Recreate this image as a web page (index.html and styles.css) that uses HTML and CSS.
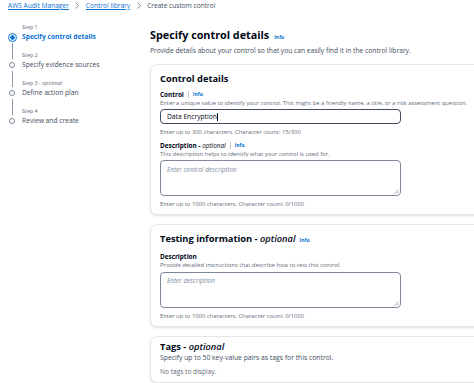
FILE: index.html
```html
<!DOCTYPE html>
<html lang="en">
<head>
    <meta charset="UTF-8">
    <title>Create custom control</title>
    <link rel="stylesheet" href="styles.css">
</head>
<body>
    <div class="crumbs">
        <a href="#">AWS Audit Manager</a>
        <svg class="chev" viewBox="0 0 4 7"><polyline points="0.5,0.5 3.5,3.5 0.5,6.5"/></svg>
        <a href="#">Control library</a>
        <svg class="chev" viewBox="0 0 4 7"><polyline points="0.5,0.5 3.5,3.5 0.5,6.5"/></svg>
        <span class="here">Create custom control</span>
    </div>

    <div class="page">
        <ol class="steps">
            <li class="step active">
                <span class="step-num">Step 1</span>
                <span class="dot"></span>
                <span class="step-title">Specify control details</span>
                <span class="rail rail-down"></span>
            </li>
            <li class="step">
                <span class="rail rail-up"></span>
                <span class="step-num">Step 2</span>
                <span class="dot"></span>
                <span class="step-title">Specify evidence sources</span>
                <span class="rail rail-down"></span>
            </li>
            <li class="step">
                <span class="rail rail-up"></span>
                <span class="step-num">Step 3 - <i>optional</i></span>
                <span class="dot"></span>
                <span class="step-title">Define action plan</span>
                <span class="rail rail-down"></span>
            </li>
            <li class="step">
                <span class="rail rail-up"></span>
                <span class="step-num">Step 4</span>
                <span class="dot"></span>
                <span class="step-title">Review and create</span>
            </li>
        </ol>

        <div class="main">
            <h1>Specify control details <a class="info" href="#">Info</a></h1>
            <p class="lead">Provide details about your control so that you can easily find it in the control library.</p>

            <div class="card">
                <h2>Control details</h2>
                <div class="field">
                    <div class="label">Control <span class="sep"></span><a class="info" href="#">Info</a></div>
                    <div class="hint">Enter a unique value to identify your control. This might be a friendly name, a title, or a risk assessment question.</div>
                    <div class="input">Data Encryption<span class="caret"></span></div>
                    <div class="count">Enter up to 300 characters. Character count: 15/300</div>
                </div>
                <div class="field">
                    <div class="label">Description -&nbsp;<i>optional</i> <span class="sep"></span><a class="info" href="#">Info</a></div>
                    <div class="hint">This description helps to identify what your control is used for.</div>
                    <div class="area">Enter control description
                        <svg class="grip" viewBox="0 0 5 5"><line x1="0.5" y1="4.5" x2="4.5" y2="0.5"/><line x1="2.5" y1="4.5" x2="4.5" y2="2.5"/></svg>
                    </div>
                    <div class="count">Enter up to 1000 characters. Character count: 0/1000</div>
                </div>
            </div>

            <div class="card">
                <h2>Testing information -&nbsp;<i>optional</i> <a class="info" href="#">Info</a></h2>
                <div class="field">
                    <div class="label">Description</div>
                    <div class="hint">Provide detailed instructions that describe how to test this control.</div>
                    <div class="area">Enter description
                        <svg class="grip" viewBox="0 0 5 5"><line x1="0.5" y1="4.5" x2="4.5" y2="0.5"/><line x1="2.5" y1="4.5" x2="4.5" y2="2.5"/></svg>
                    </div>
                    <div class="count">Enter up to 1000 characters. Character count: 0/1000</div>
                </div>
            </div>

            <div class="card card-tags">
                <h2>Tags -&nbsp;<i>optional</i></h2>
                <p class="card-desc">Specify up to 50 key-value pairs as tags for this control.</p>
                <p class="empty">No tags to display.</p>
            </div>
        </div>
    </div>
</body>
</html>
```

FILE: styles.css
```css
*{
    margin:0;
    padding:0;
    box-sizing:border-box;
}
body{
    font-family:"Open Sans", "Noto Sans", sans-serif;
    color:#000716;
    background:#fff;
    width:474px;
    height:383px;
    overflow:hidden;
}
a{
    color:#0972d3;
}

/* breadcrumbs */
.crumbs{
    display:flex;
    align-items:center;
    gap:6.5px;
    height:11px;
    padding-left:8px;
    font-size:6.6px;
    line-height:11px;
    white-space:nowrap;
}
.crumbs a{
    text-decoration:underline;
}
.crumbs .here{
    color:#414d5c;
}
.chev{
    width:4px;
    height:7px;
    fill:none;
    stroke:#5f6b7a;
    stroke-width:0.8;
}

.page{
    display:grid;
    grid-template-columns:150px 340px;
    margin-top:11px;
}

/* wizard steps */
.steps{
    list-style:none;
    padding-left:6px;
}
.step{
    display:grid;
    grid-template-columns:12px 1fr;
    grid-template-rows:10px 10px 8px;
    column-gap:4px;
}
.step-num{
    grid-column:2;
    grid-row:1;
    font-size:5.4px;
    line-height:10px;
    color:#5f6b7a;
}
.rail{
    grid-column:1;
    justify-self:center;
    width:1px;
    background:#8d99a8;
}
.rail-up{
    grid-row:1;
    margin-bottom:1px;
}
.rail-down{
    grid-row:3;
    margin-top:1px;
}
.dot{
    grid-column:1;
    grid-row:2;
    align-self:center;
    justify-self:center;
    width:6px;
    height:6px;
    border:1px solid #7d8998;
    border-radius:50%;
    background:#fff;
}
.step.active .dot{
    width:9px;
    height:9px;
    border:1.5px solid #0972d3;
    background:radial-gradient(circle, #0972d3 0 2px, #fff 2.4px);
}
.step-title{
    grid-column:2;
    grid-row:2;
    font-size:6.7px;
    line-height:10px;
    color:#414d5c;
    white-space:nowrap;
}
.step.active .step-title{
    color:#0972d3;
    font-weight:700;
}

/* main column */
.main{
    padding-top:6px;
}
h1{
    display:flex;
    align-items:baseline;
    gap:5px;
    font-size:10.8px;
    line-height:14px;
    font-weight:700;
}
.info{
    font-size:5px;
    font-weight:700;
    text-decoration:none;
}
.lead{
    margin-top:1.5px;
    font-size:6.7px;
    line-height:9px;
    color:#414d5c;
}

.card{
    margin-top:9px;
    padding:7px 9px 6px;
    border:1px solid #e4e6e9;
    border-radius:7px;
    background:#fff;
    box-shadow:0 1px 2px rgba(0,7,22,0.12);
}
.card h2{
    display:flex;
    align-items:baseline;
    font-size:9.3px;
    line-height:13px;
    font-weight:700;
    margin-bottom:5px;
}
.card h2 i{
    font-weight:600;
}
.card h2 .info{
    margin-left:4px;
}

.field + .field{
    margin-top:5px;
}
.label{
    display:flex;
    align-items:center;
    font-size:6.4px;
    line-height:9px;
    font-weight:700;
}
.label i{
    font-weight:400;
}
.sep{
    width:1px;
    height:7px;
    background:#c6c6cd;
    margin:0 4px 0 4px;
}
.hint,
.count{
    font-size:5.85px;
    line-height:8px;
    color:#5f6b7a;
    white-space:nowrap;
}
.input{
    margin-top:2.5px;
    width:241px;
    height:15px;
    padding:0 6px;
    border:1px solid #414d5c;
    border-radius:4px;
    font-size:6.7px;
    line-height:13px;
    font-weight:500;
}
.caret{
    display:inline-block;
    width:1px;
    height:8px;
    background:#000716;
    vertical-align:-1.5px;
}
.area{
    position:relative;
    margin-top:2.5px;
    width:241px;
    height:36px;
    padding:3.5px 6px;
    border:1px solid #7d8998;
    border-radius:4px;
    font-size:6.4px;
    line-height:9px;
    font-style:italic;
    color:#7d8998;
}
.grip{
    position:absolute;
    right:1px;
    bottom:1px;
    width:5px;
    height:5px;
    stroke:#7d8998;
    stroke-width:0.6;
}
.count{
    margin-top:3.5px;
}
.area + .count{
    margin-top:4px;
}

.card-tags{
    padding-top:4px;
}
.card-tags h2{
    line-height:12px;
    margin-bottom:0;
}
.card-desc{
    font-size:6.8px;
    line-height:9px;
    color:#414d5c;
}
.empty{
    margin-top:5.5px;
    font-size:6.6px;
    line-height:9px;
    color:#5f6b7a;
}
```
